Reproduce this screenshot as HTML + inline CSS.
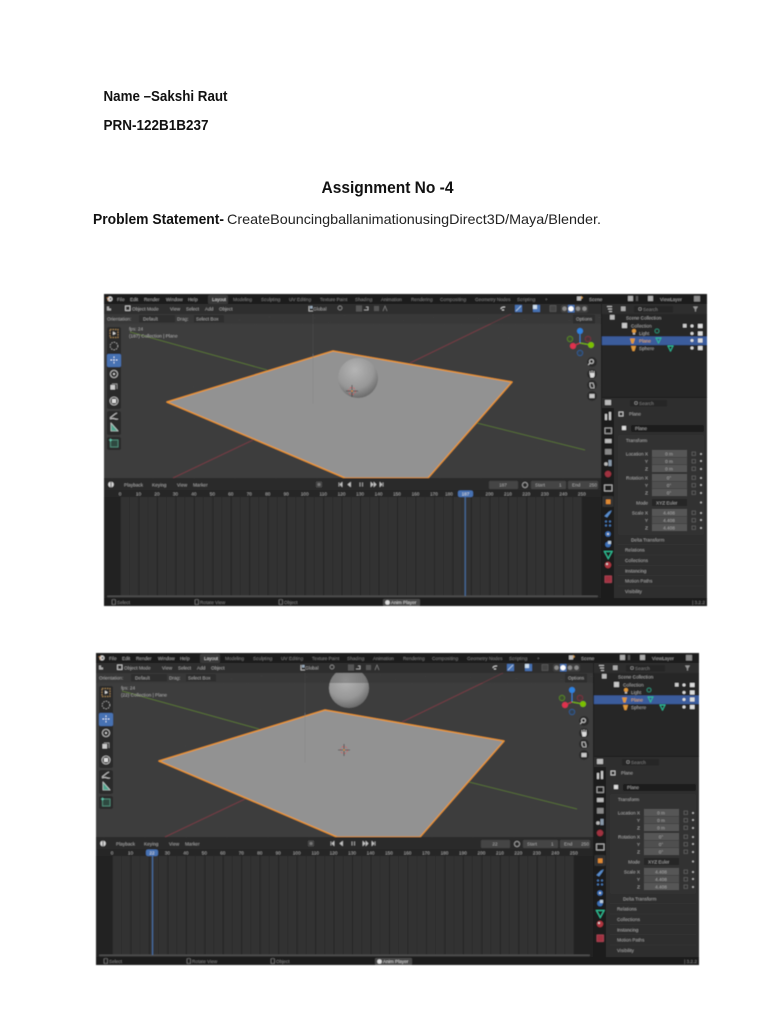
<!DOCTYPE html>
<html><head><meta charset="utf-8"><title>Assignment No -4</title>
<style>
html,body{margin:0;padding:0;background:#fff;width:768px;height:1024px;overflow:hidden}
svg{display:block}
.d{font-family:"Liberation Sans",sans-serif;fill:#111}
.b{font-weight:bold}
.t{font-family:"Liberation Sans",sans-serif;font-size:4.7px;fill:#a8a8a8}
.m{text-anchor:middle}.e{text-anchor:end}
.w{fill:#dcdcdc}.dim{fill:#7c7c7c}
</style></head><body>
<svg xmlns="http://www.w3.org/2000/svg" width="768" height="1024" viewBox="0 0 768 1024">
<defs>
<filter id="bl" x="-2%" y="-2%" width="104%" height="104%"><feGaussianBlur stdDeviation="0.45"/></filter>
<pattern id="grid" width="15" height="15" patternUnits="userSpaceOnUse" patternTransform="matrix(1,.277,1,-.48,0,0)">
<path d="M0 0H15M0 0V15" stroke="#434343" stroke-width=".4" fill="none"/></pattern>
<pattern id="tl" x="16" y="0" width="18.47" height="100" patternUnits="userSpaceOnUse">
<rect width="18.47" height="100" fill="#303030"/><rect width=".8" height="100" fill="#252525"/><rect x="9.2" width=".6" height="100" fill="#2a2a2a"/></pattern>
<radialGradient id="sph" cx=".42" cy=".3" r=".78"><stop offset="0" stop-color="#b4b4b4"/><stop offset=".6" stop-color="#979797"/><stop offset="1" stop-color="#5c5c5c"/></radialGradient>
<clipPath id="vc"><rect x="0" y="0" width="497" height="184"/></clipPath>

<g id="vp">
<rect width="603" height="312" fill="#202020"/>
<rect x="0" y="10" width="497" height="174" fill="#3c3c3c"/>
<rect x="0" y="10" width="497" height="174" fill="url(#grid)"/>
<path d="M26 38L163 76M373 129L481 156" stroke="#5c7a33" stroke-width=".8" fill="none"/>
<path d="M69 184L149 146M306 69L409 19" stroke="#7f3b47" stroke-width=".8" fill="none"/>
<path d="M209 20V60" stroke="#4c4c4c" stroke-width=".5"/>
<polygon points="63,108 229,57 408,88 324,184 241,184" fill="#929292" stroke="#ee962e" stroke-width="1.300" stroke-linejoin="round"/>
<path d="M209 60V110" stroke="#848484" stroke-width=".5"/>
</g>

<g id="cur">
<circle cx="248" cy="97" r="3.500" fill="none" stroke="#d9555a" stroke-width=".7" stroke-dasharray="2 1.500"/>
<path d="M248 91V103M242 97H254" stroke="#2a2a2a" stroke-width=".6"/>
<circle cx="248" cy="97" r=".9" fill="#e8922e"/>
</g>

<g id="ui">
<rect x="0" y="0" width="603" height="10" fill="#1e1e1e"/>
<rect x="104" y="1" width="20" height="9" rx="1.500" fill="#383838"/>
<circle cx="6" cy="5" r="2.500" fill="#d8d8d8"/><circle cx="6.500" cy="5" r="1" fill="#555"/><path d="M2.500 4L5 3.500M3.500 6.500L5 5.500" stroke="#e08a30" stroke-width=".6"/>
<rect x="0" y="10" width="497" height="10" fill="#2e2e2e"/>
<rect x="0" y="20" width="497" height="10" fill="#333" fill-opacity=".3"/>
<rect x="90" y="21" width="30" height="7.500" rx="1" fill="#2a2a2a" fill-opacity=".7"/>
<rect x="35" y="21" width="36" height="7.500" rx="1" fill="#2b2b2b" fill-opacity=".7"/>
<rect x="469" y="20.500" width="22" height="9" rx="1.500" fill="#2f2f2f"/>
<path d="M3 12.500h2v2h2v2H3zM4.500 13h3" fill="#aaa"/>
<rect x="21.500" y="12" width="4.500" height="4.500" fill="none" stroke="#ddd" stroke-width=".8"/>
<path d="M205 12v5h4" fill="none" stroke="#ccc" stroke-width=".8"/><rect x="206" y="12" width="2.500" height="2.500" fill="#9ab"/>
<circle cx="236" cy="14" r="2" fill="none" stroke="#999" stroke-width=".7"/>
<rect x="252" y="11.500" width="6" height="6" fill="#555"/><path d="M260 16h4v-3h-2" fill="none" stroke="#bbb" stroke-width=".8"/>
<rect x="270" y="12" width="5" height="5" fill="#555"/><path d="M279 17l2-5 2 5" fill="none" stroke="#888" stroke-width=".6"/>
<path d="M397 15c0-2 3-2 4-2M398 16h2" fill="none" stroke="#ccc" stroke-width="1"/>
<rect x="411" y="11" width="7" height="7" fill="#4772b3"/><path d="M412 17l5-5" stroke="#cde" stroke-width=".6"/>
<rect x="429" y="11" width="7" height="7" fill="#4772b3"/><rect x="429" y="11" width="4" height="4" fill="#cde"/>
<rect x="446" y="11.500" width="6" height="6" fill="#444" stroke="#777" stroke-width=".4"/>
<rect x="457" y="11" width="27" height="7.500" rx="2" fill="#404040"/>
<circle cx="460.500" cy="14.700" r="2.200" fill="#8a8a8a"/><rect x="464" y="11" width="6.500" height="7.500" fill="#4772b3"/><circle cx="467" cy="14.700" r="2.600" fill="#fff"/><circle cx="474" cy="14.700" r="2.200" fill="#8a8a8a"/><circle cx="480.500" cy="14.700" r="2.200" fill="#8a8a8a"/>
<rect x="3" y="33" width="14" height="82" rx="2" fill="#2b2b2b"/>
<rect x="3" y="117" width="14" height="24" rx="2" fill="#2b2b2b"/>
<rect x="3" y="143" width="14" height="13" rx="2" fill="#2b2b2b"/>
<rect x="3" y="60" width="14" height="13" rx="1.500" fill="#4772b3"/>
<rect x="6" y="35.500" width="8" height="8" fill="none" stroke="#c49a5a" stroke-width=".7" stroke-dasharray="1.500 1"/><path d="M9 37.500l3 2-3 1.500z" fill="#ddd"/>
<circle cx="10" cy="52" r="3.800" fill="none" stroke="#bbb" stroke-width=".6" stroke-dasharray="1.500 1"/>
<path d="M10 62.500v7M6.500 66h7" stroke="#e5eefc" stroke-width=".9" stroke-dasharray="1.500 1.200"/>
<circle cx="10" cy="80" r="3.600" fill="none" stroke="#ccc" stroke-width=".8"/><circle cx="10" cy="80" r="1" fill="#ddd"/>
<rect x="6.500" y="91" width="4.500" height="4.500" fill="#ccc"/><path d="M8 90h5v5" fill="none" stroke="#aaa" stroke-width=".7"/>
<circle cx="10" cy="107" r="4" fill="none" stroke="#ccc" stroke-width=".8"/><rect x="8" y="105" width="4" height="4" fill="#ddd"/>
<path d="M6 124l5-4 2-1M6 125c4-2 5 1 8 0" stroke="#ccc" stroke-width=".9" fill="none"/>
<path d="M7 129v8h7zM7 137h7" fill="#4ea58d" stroke="#ddd" stroke-width=".6"/>
<rect x="6.500" y="146" width="7.500" height="7" fill="#2d4a40" stroke="#5aa58d" stroke-width=".7"/><path d="M5 146h3M6.500 144.500v3" stroke="#7fd" stroke-width=".5"/>
<path d="M476 49V37" stroke="#2f83e0" stroke-width=".9"/><path d="M476 49L469 52" stroke="#e0304d" stroke-width=".9"/><path d="M476 49L487 51" stroke="#7cc000" stroke-width=".9"/>
<circle cx="466" cy="45" r="2.700" fill="#3c4d30" stroke="#5c8a20" stroke-width=".8"/>
<circle cx="484" cy="45" r="2.700" fill="#4a3538" stroke="#803040" stroke-width=".8"/>
<circle cx="476" cy="59" r="2.700" fill="#30404f" stroke="#2d5f9a" stroke-width=".8"/>
<circle cx="476" cy="37" r="3" fill="#2f83e0"/><circle cx="469" cy="52" r="3" fill="#e0304d"/><circle cx="487" cy="51" r="3" fill="#7cc000"/>
<circle cx="488" cy="68" r="5" fill="#2a2a2a"/><circle cx="487.500" cy="67.500" r="2" fill="none" stroke="#ddd" stroke-width=".8"/><path d="M486 69l-1.800 2" stroke="#ddd" stroke-width=".8"/>
<circle cx="488" cy="80" r="5" fill="#2a2a2a"/><path d="M485.500 79h5v3l-1 1.500h-3z" fill="#ddd"/><path d="M486 79v-2M488 79v-2.500M490 79v-2" stroke="#ddd" stroke-width=".7"/>
<circle cx="488" cy="91" r="5" fill="#2a2a2a"/><path d="M486 89h3l1 3v2h-3l-1-2z" fill="none" stroke="#ccc" stroke-width=".8"/>
<circle cx="488" cy="102" r="5" fill="#2a2a2a"/><rect x="485.500" y="100" width="5" height="4" fill="#c8c8c8"/>

<rect x="0" y="184" width="497" height="12" fill="#2b2b2b"/>
<rect x="0" y="196" width="497" height="7" fill="#252525"/>
<rect x="0" y="203" width="497" height="99" fill="#222"/>
<rect x="16" y="203" width="462" height="99" fill="url(#tl)"/>
<rect x="3" y="301.500" width="491" height="1.800" rx="1" fill="#4e4e4e"/>
<rect x="385" y="187" width="29" height="8" rx="1" fill="#444"/>
<rect x="427" y="187" width="35" height="8" rx="1" fill="#444"/>
<rect x="464" y="187" width="30" height="8" rx="1" fill="#444"/>
<circle cx="421" cy="191" r="2.600" fill="none" stroke="#bbb" stroke-width=".7"/>
<rect x="212" y="187.500" width="6" height="6" rx="1" fill="#4a4a4a"/><circle cx="215" cy="190.500" r="1.500" fill="#777"/>
<path d="M235 188.500v4M236 190.500l2-2v4zM244 190.500l2.500-2v4zM256 188.500v4M258.500 188.500v4M267 188.500l2 2-2 2zM270 188.500l2 2-2 2zM276 188.500l2 2-2 2zM279 188.500v4" stroke="#c4c4c4" stroke-width=".7" fill="#c4c4c4"/>
<circle cx="7" cy="190.500" r="2.800" fill="#d8d8d8"/><path d="M7 188v5" stroke="#222" stroke-width=".8"/>

<rect x="0" y="304" width="603" height="8" fill="#1e1e1e"/>
<rect x="279" y="305" width="37" height="7" rx="1" fill="#4a4a4a"/>
<circle cx="283.500" cy="308.500" r="2.300" fill="#ddd"/>
<rect x="8" y="305.500" width="3.500" height="5" rx="1" fill="none" stroke="#888" stroke-width=".6"/>
<rect x="91" y="305.500" width="3.500" height="5" rx="1" fill="none" stroke="#888" stroke-width=".6"/>
<rect x="175" y="305.500" width="3.500" height="5" rx="1" fill="none" stroke="#888" stroke-width=".6"/>

<rect x="497" y="10" width="106" height="294" fill="#1b1b1b"/>
<rect x="498" y="10" width="105" height="10" fill="#2e2e2e"/>
<rect x="498" y="20" width="105" height="83" fill="#282828"/>
<rect x="498" y="42.500" width="105" height="8.500" fill="#3b5b9c"/>
<rect x="530" y="12" width="39" height="6.500" rx="1" fill="#252525"/>
<circle cx="536" cy="15" r="1.500" fill="none" stroke="#aaa" stroke-width=".5"/>
<path d="M503 12.500h5M504 15h4M505 17.500h3" stroke="#bbb" stroke-width=".9"/>
<rect x="517" y="12.500" width="4.500" height="4.500" fill="#aaa"/>
<path d="M589 12.500h5l-2 3v2l-1 0v-2z" fill="#999"/>
<rect x="473" y="2.500" width="4" height="4" fill="#bbb"/><path d="M477 2l2 1.500-2 2z" fill="#d9a050"/>
<rect x="524" y="2" width="5" height="5" fill="#aaa"/><rect x="532" y="2" width="2" height="5" fill="#555"/>
<rect x="544" y="2" width="5" height="5" fill="#aaa"/>
<rect x="590" y="2" width="6" height="5.500" fill="#8a8a8a"/>
<rect x="506" y="21" width="4.500" height="4.500" fill="#bbb"/>
<rect x="518" y="29" width="5" height="5" fill="#c8c8c8"/>
<circle cx="530" cy="37" r="2" fill="#e09a3a"/><rect x="529" y="39" width="2" height="1.500" fill="#bbb"/>
<path d="M526 44.500h5l-1.500 5h-2z" fill="#e09a3a"/><path d="M527 52h5l-1.500 5h-2z" fill="#e09a3a"/>
<circle cx="553" cy="37" r="2" fill="none" stroke="#2a9a80" stroke-width=".8"/>
<path d="M552 44h5l-2.500 5z" fill="none" stroke="#2abf9a" stroke-width=".9"/><path d="M564 52h5l-2.500 5z" fill="none" stroke="#2abf9a" stroke-width=".9"/>
<path d="M579 30h3.500v3.500h-3.500z" fill="#ccc"/>
<g fill="#ddd"><circle cx="588" cy="32" r="1.500"/><circle cx="588" cy="39.500" r="1.500"/><circle cx="588" cy="46.500" r="1.500"/><circle cx="588" cy="54" r="1.500"/>
<rect x="594" y="30" width="4.500" height="4"/><rect x="594" y="37.500" width="4.500" height="4"/><rect x="594" y="44.500" width="4.500" height="4"/><rect x="594" y="52" width="4.500" height="4"/></g>

<rect x="498" y="104" width="105" height="10" fill="#2e2e2e"/>
<rect x="498" y="114" width="12" height="190" fill="#1c1c1c"/>
<rect x="510" y="114" width="93" height="190" fill="#2d2d2d"/>
<rect x="526" y="106" width="37" height="6.500" rx="1" fill="#252525"/>
<circle cx="532" cy="109" r="1.500" fill="none" stroke="#aaa" stroke-width=".5"/>
<rect x="501" y="106" width="6" height="5" fill="#bbb"/>
<rect x="515" y="118" width="4" height="4" fill="none" stroke="#ddd" stroke-width=".8"/>
<rect x="518" y="132" width="4" height="4" fill="#ddd"/>
<rect x="527" y="131" width="73" height="7" rx="1" fill="#1e1e1e"/>
<rect x="514" y="141" width="86" height="100" rx="1.500" fill="#323232"/>
<rect x="548" y="156" width="35" height="7" fill="#565656"/><rect x="548" y="163.500" width="35" height="7" fill="#505050"/><rect x="548" y="171" width="35" height="7" fill="#565656"/>
<rect x="548" y="180" width="35" height="7" fill="#565656"/><rect x="548" y="187.500" width="35" height="7" fill="#505050"/><rect x="548" y="195" width="35" height="7" fill="#565656"/>
<rect x="548" y="205" width="35" height="7" rx="1" fill="#262626"/>
<rect x="548" y="215" width="35" height="7" fill="#565656"/><rect x="548" y="222.500" width="35" height="7" fill="#505050"/><rect x="548" y="230" width="35" height="7" fill="#565656"/>
<g fill="none" stroke="#777" stroke-width=".5"><rect x="588" y="158" width="3.500" height="3.500"/><rect x="588" y="165.500" width="3.500" height="3.500"/><rect x="588" y="173" width="3.500" height="3.500"/><rect x="588" y="182" width="3.500" height="3.500"/><rect x="588" y="189.500" width="3.500" height="3.500"/><rect x="588" y="197" width="3.500" height="3.500"/><rect x="588" y="217" width="3.500" height="3.500"/><rect x="588" y="224.500" width="3.500" height="3.500"/><rect x="588" y="232" width="3.500" height="3.500"/></g>
<g fill="#ccc"><circle cx="597" cy="160" r=".9"/><circle cx="597" cy="167" r=".9"/><circle cx="597" cy="175" r=".9"/><circle cx="597" cy="184" r=".9"/><circle cx="597" cy="191" r=".9"/><circle cx="597" cy="199" r=".9"/><circle cx="597" cy="208.500" r=".9"/><circle cx="597" cy="219" r=".9"/><circle cx="597" cy="226" r=".9"/><circle cx="597" cy="234" r=".9"/></g>
<path d="M514 250.500H600M514 261H600M514 271.500H600M514 281.500H600M514 292H600" stroke="#3a3a3a" stroke-width=".5"/>
<path d="M501 120h2v6h-2zM505 118h2v8h-2z" fill="#ccc"/>
<rect x="501" y="134" width="6.500" height="5.500" fill="none" stroke="#bbb" stroke-width=".8"/>
<rect x="501" y="145" width="6.500" height="4" fill="#bbb"/>
<rect x="501" y="155" width="6.500" height="5.500" fill="#888"/>
<circle cx="502" cy="170" r="1.800" fill="#bbb"/><rect x="504.500" y="166" width="3" height="6" fill="#8899aa"/>
<circle cx="504" cy="180" r="3.200" fill="#a03040"/>
<rect x="500.500" y="191" width="7.500" height="6" fill="none" stroke="#ccc" stroke-width=".8"/>
<rect x="498.500" y="202" width="11" height="11" rx="1" fill="#333"/><rect x="502" y="205.500" width="4.500" height="4.500" fill="#e08a30"/>
<path d="M501 222l4-4 2-1-1 2-3 4z" fill="#5a8fd0" stroke="#5a8fd0" stroke-width=".7"/>
<g fill="#4a80c0"><circle cx="502" cy="227.500" r="1"/><circle cx="506" cy="227.500" r="1"/><circle cx="502" cy="231.500" r="1"/><circle cx="506" cy="231.500" r="1"/></g>
<circle cx="504" cy="240" r="2.800" fill="#3a70b8"/><circle cx="504" cy="240" r="1" fill="#ddd"/>
<circle cx="504" cy="250.500" r="2.800" fill="#3a70b8"/><rect x="504" y="247" width="3" height="3" fill="#bcd"/>
<path d="M500.500 257.500h7.500l-3.750 7z" fill="none" stroke="#2fc59a" stroke-width="1.100"/>
<circle cx="504" cy="271" r="3.200" fill="#b0343f"/><circle cx="503" cy="270" r="1" fill="#ddd"/>
<rect x="501" y="282" width="6.500" height="6.500" fill="#a03040" stroke="#c05060" stroke-width=".6"/>
</g>
</defs>

<!-- document text -->
<text class="d b" x="103.500" y="101" font-size="15" textLength="124" lengthAdjust="spacingAndGlyphs">Name –Sakshi Raut</text>
<text class="d b" x="103.500" y="130" font-size="15" textLength="105" lengthAdjust="spacingAndGlyphs">PRN-122B1B237</text>
<text class="d b" x="321.500" y="193" font-size="17" textLength="132" lengthAdjust="spacingAndGlyphs">Assignment No -4</text>
<text class="d b" x="93" y="224" font-size="15" textLength="131" lengthAdjust="spacingAndGlyphs">Problem Statement-</text>
<text class="d" x="227" y="224" font-size="14" style="fill:#222" textLength="374" lengthAdjust="spacingAndGlyphs">CreateBouncingballanimationusingDirect3D/Maya/Blender.</text>

<!-- screenshot 1 -->
<g transform="translate(104,294)" filter="url(#bl)">
<use href="#vp"/>
<circle cx="254" cy="84" r="20" fill="url(#sph)"/>
<use href="#cur"/>
<use href="#ui"/>
<rect x="360.700" y="203" width="1.100" height="99" fill="#4a6fa5"/>
<rect x="354" y="196.500" width="15" height="6.500" rx="2" fill="#4772b3"/>
<text class="t w m" x="361.500" y="201.700">187</text>
<text class="t" x="13" y="7">File</text><text class="t" x="26" y="7">Edit</text><text class="t" x="40" y="7">Render</text><text class="t" x="62" y="7">Window</text><text class="t" x="84" y="7">Help</text>
<text class="t w" x="108" y="7">Layout</text><text class="t dim" x="129" y="7">Modeling</text><text class="t dim" x="157" y="7">Sculpting</text><text class="t dim" x="185" y="7">UV Editing</text><text class="t dim" x="216" y="7">Texture Paint</text><text class="t dim" x="251" y="7">Shading</text><text class="t dim" x="277" y="7">Animation</text><text class="t dim" x="307" y="7">Rendering</text><text class="t dim" x="336" y="7">Compositing</text><text class="t dim" x="371" y="7">Geometry Nodes</text><text class="t dim" x="413" y="7">Scripting</text><text class="t dim" x="441" y="7">+</text>
<text class="t" x="485" y="7">Scene</text><text class="t" x="556" y="7">ViewLayer</text>
<text class="t" x="28" y="16.500">Object Mode</text><text class="t" x="66" y="16.500">View</text><text class="t" x="82" y="16.500">Select</text><text class="t" x="101" y="16.500">Add</text><text class="t" x="115" y="16.500">Object</text><text class="t" x="209" y="16.500">Global</text>
<text class="t" x="3" y="26.500">Orientation:</text><text class="t" x="39" y="26.500">Default</text><text class="t" x="73" y="26.500">Drag:</text><text class="t" x="92" y="26.500">Select Box</text><text class="t" x="472" y="26.500">Options</text>
<text class="t" x="25" y="36.500">fps: 24</text><text class="t" x="25" y="43.500">(187) Collection | Plane</text>
<text class="t" x="20" y="192.500">Playback</text><text class="t" x="48" y="192.500">Keying</text><text class="t" x="73" y="192.500">View</text><text class="t" x="89" y="192.500">Marker</text>
<text class="t m" x="399" y="192.500">187</text><text class="t" x="431" y="192.500">Start</text><text class="t" x="455" y="192.500">1</text><text class="t" x="468" y="192.500">End</text><text class="t e" x="493" y="192.500">250</text>
<text class="t m" x="16" y="201.500">0</text><text class="t m" x="34.500" y="201.500">10</text><text class="t m" x="53" y="201.500">20</text><text class="t m" x="71.400" y="201.500">30</text><text class="t m" x="89.900" y="201.500">40</text><text class="t m" x="108.400" y="201.500">50</text><text class="t m" x="126.800" y="201.500">60</text><text class="t m" x="145.300" y="201.500">70</text><text class="t m" x="163.800" y="201.500">80</text><text class="t m" x="182.200" y="201.500">90</text><text class="t m" x="200.700" y="201.500">100</text><text class="t m" x="219.200" y="201.500">110</text><text class="t m" x="237.600" y="201.500">120</text><text class="t m" x="256.100" y="201.500">130</text><text class="t m" x="274.600" y="201.500">140</text><text class="t m" x="293" y="201.500">150</text><text class="t m" x="311.500" y="201.500">160</text><text class="t m" x="330" y="201.500">170</text><text class="t m" x="345" y="201.500">180</text><text class="t m" x="385.400" y="201.500">200</text><text class="t m" x="403.900" y="201.500">210</text><text class="t m" x="422.300" y="201.500">220</text><text class="t m" x="440.800" y="201.500">230</text><text class="t m" x="459.300" y="201.500">240</text><text class="t m" x="477.800" y="201.500">250</text>
<text class="t dim" x="13" y="310">Select</text><text class="t dim" x="96" y="310">Rotate View</text><text class="t dim" x="180" y="310">Object</text><text class="t w" x="287" y="310">Anim Player</text><text class="t dim" x="588" y="310">| 3.2.2</text>
<text class="t" x="522" y="25.700">Scene Collection</text><text class="t" x="527" y="33.500">Collection</text><text class="t" x="535" y="41">Light</text><text class="t" x="535" y="48.500" style="fill:#f0b060">Plane</text><text class="t" x="535" y="56">Sphere</text>
<text class="t dim" x="539" y="17">Search</text><text class="t dim" x="535" y="111">Search</text>
<text class="t" x="525" y="121.500">Plane</text><text class="t" x="531" y="136">Plane</text><text class="t" x="522" y="148">Transform</text>
<text class="t e" x="544" y="161.500">Location X</text><text class="t e" x="544" y="169">Y</text><text class="t e" x="544" y="176.500">Z</text>
<text class="t m" x="565" y="161.500">0 m</text><text class="t m" x="565" y="169">0 m</text><text class="t m" x="565" y="176.500">0 m</text>
<text class="t e" x="544" y="185.500">Rotation X</text><text class="t e" x="544" y="193">Y</text><text class="t e" x="544" y="200.500">Z</text>
<text class="t m" x="565" y="185.500">0°</text><text class="t m" x="565" y="193">0°</text><text class="t m" x="565" y="200.500">0°</text>
<text class="t e" x="544" y="210.500">Mode</text><text class="t" x="552" y="210.500">XYZ Euler</text>
<text class="t e" x="544" y="220.500">Scale X</text><text class="t e" x="544" y="228">Y</text><text class="t e" x="544" y="235.500">Z</text>
<text class="t m" x="565" y="220.500">4.408</text><text class="t m" x="565" y="228">4.408</text><text class="t m" x="565" y="235.500">4.408</text>
<text class="t" x="527" y="247.500">Delta Transform</text><text class="t" x="521" y="257.500">Relations</text><text class="t" x="521" y="268">Collections</text><text class="t" x="521" y="278.500">Instancing</text><text class="t" x="521" y="288.500">Motion Paths</text><text class="t" x="521" y="299">Visibility</text>
</g>

<!-- screenshot 2 -->
<g transform="translate(96,653)" filter="url(#bl)">
<use href="#vp"/>
<g clip-path="url(#vc)"><circle cx="253" cy="35" r="20" fill="url(#sph)"/></g>
<use href="#cur"/>
<use href="#ui"/>
<rect x="56" y="203" width="1.100" height="99" fill="#4a6fa5"/>
<rect x="50" y="196.500" width="12" height="6.500" rx="2" fill="#4772b3"/>
<text class="t w m" x="56" y="201.700">22</text>
<text class="t" x="13" y="7">File</text><text class="t" x="26" y="7">Edit</text><text class="t" x="40" y="7">Render</text><text class="t" x="62" y="7">Window</text><text class="t" x="84" y="7">Help</text>
<text class="t w" x="108" y="7">Layout</text><text class="t dim" x="129" y="7">Modeling</text><text class="t dim" x="157" y="7">Sculpting</text><text class="t dim" x="185" y="7">UV Editing</text><text class="t dim" x="216" y="7">Texture Paint</text><text class="t dim" x="251" y="7">Shading</text><text class="t dim" x="277" y="7">Animation</text><text class="t dim" x="307" y="7">Rendering</text><text class="t dim" x="336" y="7">Compositing</text><text class="t dim" x="371" y="7">Geometry Nodes</text><text class="t dim" x="413" y="7">Scripting</text><text class="t dim" x="441" y="7">+</text>
<text class="t" x="485" y="7">Scene</text><text class="t" x="556" y="7">ViewLayer</text>
<text class="t" x="28" y="16.500">Object Mode</text><text class="t" x="66" y="16.500">View</text><text class="t" x="82" y="16.500">Select</text><text class="t" x="101" y="16.500">Add</text><text class="t" x="115" y="16.500">Object</text><text class="t" x="209" y="16.500">Global</text>
<text class="t" x="3" y="26.500">Orientation:</text><text class="t" x="39" y="26.500">Default</text><text class="t" x="73" y="26.500">Drag:</text><text class="t" x="92" y="26.500">Select Box</text><text class="t" x="472" y="26.500">Options</text>
<text class="t" x="25" y="36.500">fps: 24</text><text class="t" x="25" y="43.500">(22) Collection | Plane</text>
<text class="t" x="20" y="192.500">Playback</text><text class="t" x="48" y="192.500">Keying</text><text class="t" x="73" y="192.500">View</text><text class="t" x="89" y="192.500">Marker</text>
<text class="t m" x="399" y="192.500">22</text><text class="t" x="431" y="192.500">Start</text><text class="t" x="455" y="192.500">1</text><text class="t" x="468" y="192.500">End</text><text class="t e" x="493" y="192.500">250</text>
<text class="t m" x="16" y="201.500">0</text><text class="t m" x="34.500" y="201.500">10</text><text class="t m" x="71.400" y="201.500">30</text><text class="t m" x="89.900" y="201.500">40</text><text class="t m" x="108.400" y="201.500">50</text><text class="t m" x="126.800" y="201.500">60</text><text class="t m" x="145.300" y="201.500">70</text><text class="t m" x="163.800" y="201.500">80</text><text class="t m" x="182.200" y="201.500">90</text><text class="t m" x="200.700" y="201.500">100</text><text class="t m" x="219.200" y="201.500">110</text><text class="t m" x="237.600" y="201.500">120</text><text class="t m" x="256.100" y="201.500">130</text><text class="t m" x="274.600" y="201.500">140</text><text class="t m" x="293" y="201.500">150</text><text class="t m" x="311.500" y="201.500">160</text><text class="t m" x="330" y="201.500">170</text><text class="t m" x="348.500" y="201.500">180</text><text class="t m" x="366.900" y="201.500">190</text><text class="t m" x="385.400" y="201.500">200</text><text class="t m" x="403.900" y="201.500">210</text><text class="t m" x="422.300" y="201.500">220</text><text class="t m" x="440.800" y="201.500">230</text><text class="t m" x="459.300" y="201.500">240</text><text class="t m" x="477.800" y="201.500">250</text>
<text class="t dim" x="13" y="310">Select</text><text class="t dim" x="96" y="310">Rotate View</text><text class="t dim" x="180" y="310">Object</text><text class="t w" x="287" y="310">Anim Player</text><text class="t dim" x="588" y="310">| 3.2.2</text>
<text class="t" x="522" y="25.700">Scene Collection</text><text class="t" x="527" y="33.500">Collection</text><text class="t" x="535" y="41">Light</text><text class="t" x="535" y="48.500" style="fill:#f0b060">Plane</text><text class="t" x="535" y="56">Sphere</text>
<text class="t dim" x="539" y="17">Search</text><text class="t dim" x="535" y="111">Search</text>
<text class="t" x="525" y="121.500">Plane</text><text class="t" x="531" y="136">Plane</text><text class="t" x="522" y="148">Transform</text>
<text class="t e" x="544" y="161.500">Location X</text><text class="t e" x="544" y="169">Y</text><text class="t e" x="544" y="176.500">Z</text>
<text class="t m" x="565" y="161.500">0 m</text><text class="t m" x="565" y="169">0 m</text><text class="t m" x="565" y="176.500">0 m</text>
<text class="t e" x="544" y="185.500">Rotation X</text><text class="t e" x="544" y="193">Y</text><text class="t e" x="544" y="200.500">Z</text>
<text class="t m" x="565" y="185.500">0°</text><text class="t m" x="565" y="193">0°</text><text class="t m" x="565" y="200.500">0°</text>
<text class="t e" x="544" y="210.500">Mode</text><text class="t" x="552" y="210.500">XYZ Euler</text>
<text class="t e" x="544" y="220.500">Scale X</text><text class="t e" x="544" y="228">Y</text><text class="t e" x="544" y="235.500">Z</text>
<text class="t m" x="565" y="220.500">4.408</text><text class="t m" x="565" y="228">4.408</text><text class="t m" x="565" y="235.500">4.408</text>
<text class="t" x="527" y="247.500">Delta Transform</text><text class="t" x="521" y="257.500">Relations</text><text class="t" x="521" y="268">Collections</text><text class="t" x="521" y="278.500">Instancing</text><text class="t" x="521" y="288.500">Motion Paths</text><text class="t" x="521" y="299">Visibility</text>
</g>
</svg>
</body></html>
